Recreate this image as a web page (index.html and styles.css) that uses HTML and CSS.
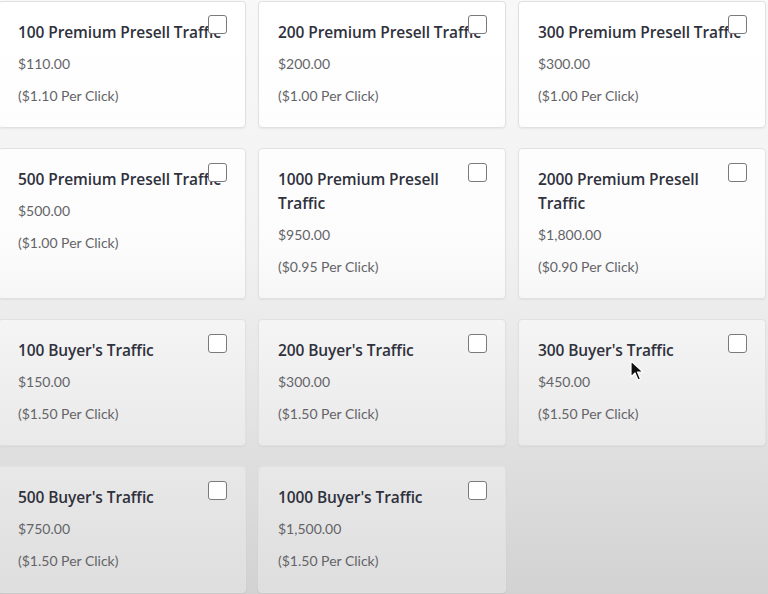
FILE: index.html
```html
<!DOCTYPE html>
<html>
<head>
<meta charset="utf-8">
<link rel="stylesheet" href="styles.css">
</head>
<body>
<div class="grid">
  <div class="card row-a"><div class="title">100 Premium Presell Traffic</div><div class="price">$110.00</div><div class="per">($1.10 Per Click)</div><span class="box"></span></div>
  <div class="card row-a"><div class="title">200 Premium Presell Traffic</div><div class="price">$200.00</div><div class="per">($1.00 Per Click)</div><span class="box"></span></div>
  <div class="card row-a"><div class="title">300 Premium Presell Traffic</div><div class="price">$300.00</div><div class="per">($1.00 Per Click)</div><span class="box"></span></div>

  <div class="card"><div class="title">500 Premium Presell Traffic</div><div class="price">$500.00</div><div class="per">($1.00 Per Click)</div><span class="box"></span></div>
  <div class="card"><div class="title">1000 Premium Presell Traffic</div><div class="price">$950.00</div><div class="per">($0.95 Per Click)</div><span class="box"></span></div>
  <div class="card"><div class="title">2000 Premium Presell Traffic</div><div class="price">$1,800.00</div><div class="per">($0.90 Per Click)</div><span class="box"></span></div>

  <div class="card"><div class="title">100 Buyer's Traffic</div><div class="price">$150.00</div><div class="per">($1.50 Per Click)</div><span class="box"></span></div>
  <div class="card"><div class="title">200 Buyer's Traffic</div><div class="price">$300.00</div><div class="per">($1.50 Per Click)</div><span class="box"></span></div>
  <div class="card"><div class="title">300 Buyer's Traffic</div><div class="price">$450.00</div><div class="per">($1.50 Per Click)</div><span class="box"></span>
    <svg class="cursor" width="14" height="22" viewBox="0 0 14 22"><path d="M1 1 L1 17 L5 13 L8 20 L10.5 19 L7.5 12 L13 12 Z" fill="#111" stroke="#fff" stroke-width="1.2" stroke-linejoin="round"/></svg>
  </div>

  <div class="card"><div class="title">500 Buyer's Traffic</div><div class="price">$750.00</div><div class="per">($1.50 Per Click)</div><span class="box"></span></div>
  <div class="card"><div class="title">1000 Buyer's Traffic</div><div class="price">$1,500.00</div><div class="per">($1.50 Per Click)</div><span class="box"></span></div>
</div>
</body>
</html>
```
FILE: styles.css
```css
html, body {
  margin: 0;
  padding: 0;
  height: 100%;
}
body {
  background: linear-gradient(to bottom, #f8f8f8 0%, #f2f2f2 40%, #e3e3e3 70%, #d2d2d2 100%) fixed;
  font-family: Lato, "Liberation Sans", sans-serif;
  overflow: hidden;
}
.grid {
  display: grid;
  grid-template-columns: 248px 248px 248px;
  column-gap: 12px;
  row-gap: 20px;
  margin-left: -2px;
  margin-top: 1px;
}
.card {
  position: relative;
  box-sizing: border-box;
  background: linear-gradient(to bottom, #ffffff 0%, #fcfcfc 40%, #ececec 70%, #dedede 100%) fixed;
  border: 1px solid #e1e1e1;
  border-radius: 4px;
  box-shadow: 0 1px 2px rgba(0,0,0,0.06);
  padding: 18px 8px 19px 19px;
  min-height: 126px;
}
.title {
  font-family: "Open Sans", Lato, sans-serif;
  font-size: 15.5px;
  font-weight: 600;
  color: #2f313c;
  line-height: 24px;
  letter-spacing: -0.1px;
  max-width: 208px;
}
.price, .per {
  font-size: 14px;
  color: #646468;
  line-height: 24px;
  margin-top: 8px;
}
.box {
  position: absolute;
  top: 14px;
  right: 18px;
  width: 17px;
  height: 17px;
  border: 1.5px solid #7a7a7e;
  border-radius: 3px;
  background: #fff;
}
.row-a .box {
  top: 13px;
}
.cursor {
  position: absolute;
  left: 111px;
  top: 40px;
}
```
